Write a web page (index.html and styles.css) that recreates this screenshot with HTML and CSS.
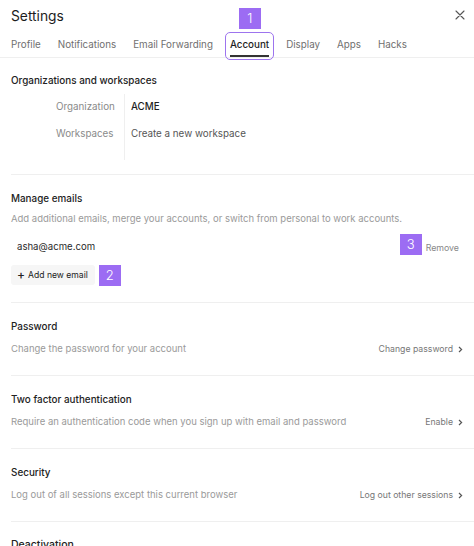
FILE: index.html
```html
<!DOCTYPE html>
<html>
<head>
<meta charset="utf-8">
<link rel="stylesheet" href="styles.css">
</head>
<body>
<div class="page">
  <header class="header">
    <h1 class="title">Settings</h1>
    <button class="close" aria-label="Close">
      <svg width="10" height="10" viewBox="0 0 10 10"><path d="M1 1L9 9M9 1L1 9" stroke="#555" stroke-width="1.1" fill="none" stroke-linecap="round"/></svg>
    </button>
  </header>
  <nav class="tabs">
    <span class="tab">Profile</span>
    <span class="tab">Notifications</span>
    <span class="tab">Email Forwarding</span>
    <span class="tab active">Account<span class="hl"></span><span class="badge badge-1">1</span></span>
    <span class="tab">Display</span>
    <span class="tab">Apps</span>
    <span class="tab">Hacks</span>
  </nav>

  <section class="section org">
    <h2 class="sec-title">Organizations and workspaces</h2>
    <div class="org-grid">
      <div class="org-label">Organization</div>
      <div class="org-value strong">ACME</div>
      <div class="org-label last">Workspaces</div>
      <div class="org-value last">Create a new workspace</div>
    </div>
  </section>

  <section class="section emails">
    <h2 class="sec-title">Manage emails</h2>
    <p class="desc">Add additional emails, merge your accounts, or switch from personal to work accounts.</p>
    <div class="email-row">
      <span class="email">asha@acme.com</span>
      <span class="remove">Remove<span class="badge badge-3">3</span></span>
    </div>
    <div class="add-row">
      <button class="add-btn"><span class="plus">+</span> Add new email<span class="badge badge-2">2</span></button>
    </div>
  </section>

  <section class="section plain">
    <h2 class="sec-title">Password</h2>
    <div class="row">
      <p class="desc">Change the password for your account</p>
      <span class="action">Change password <svg class="chev" width="5" height="7" viewBox="0 0 5 7"><path d="M1 1L3.6 3.5L1 6" stroke="#555" stroke-width="1.2" fill="none"/></svg></span>
    </div>
  </section>

  <section class="section plain">
    <h2 class="sec-title">Two factor authentication</h2>
    <div class="row">
      <p class="desc">Require an authentication code when you sign up with email and password</p>
      <span class="action">Enable <svg class="chev" width="5" height="7" viewBox="0 0 5 7"><path d="M1 1L3.6 3.5L1 6" stroke="#555" stroke-width="1.2" fill="none"/></svg></span>
    </div>
  </section>

  <section class="section plain">
    <h2 class="sec-title">Security</h2>
    <div class="row">
      <p class="desc">Log out of all sessions except this current browser</p>
      <span class="action">Log out other sessions <svg class="chev" width="5" height="7" viewBox="0 0 5 7"><path d="M1 1L3.6 3.5L1 6" stroke="#555" stroke-width="1.2" fill="none"/></svg></span>
    </div>
  </section>

  <section class="section plain">
    <h2 class="sec-title deact">Deactivation</h2>
  </section>
</div>
</body>
</html>
```

FILE: styles.css
```css
* { box-sizing: border-box; }
html, body { margin: 0; padding: 0; background: #fff; }
body {
  font-family: Inter, "Noto Sans", "Liberation Sans", sans-serif;
  color: #222;
  overflow: hidden;
  height: 546px;
}
.page { width: 474px; }
.header {
  height: 32px;
  padding: 7px 11px 0 11px;
  display: flex;
  justify-content: space-between;
  align-items: flex-start;
}
.title {
  margin: 0;
  font-size: 13.8px;
  line-height: 18px;
  font-weight: 400;
  color: #1c1c1c;
}
.close {
  border: 0; background: none; padding: 0;
  width: 10px; height: 10px;
  margin-top: 3px;
  margin-right: -2px;
  display: flex;
}
.tabs {
  display: flex;
  gap: 17px;
  padding: 0 11px;
  border-bottom: 1px solid #efefef;
}
.tab {
  position: relative;
  font-size: 9.8px;
  line-height: 13px;
  padding: 6px 0 4px;
  color: #6f6f6f;
  border-bottom: 2px solid transparent;
  white-space: nowrap;
}
.tab.active {
  color: #1e1e1e;
  font-weight: 500;
  border-bottom-color: #333;
}
.hl {
  position: absolute;
  left: -5px; right: -5px; top: 0; bottom: -5px;
  border: 1.5px solid #9d74ee;
  border-radius: 5px;
}
.badge {
  position: absolute;
  width: 22px;
  height: 21px;
  background: #9c6cf3;
  color: #fff;
  font-size: 13px;
  line-height: 21px;
  text-align: center;
  font-weight: 300;
}
.badge-1 { left: 9px; top: -24px; }
.section {
  margin-left: 11px;
  border-top: 1px solid #efefef;
  padding: 16px 11px 17px 0;
}
.section.org { border-top: 0; margin-left: 0; padding: 15px 11px 14px 11px; }
.section.plain { padding-bottom: 19px; }
.sec-title {
  margin: 0;
  font-size: 9.9px;
  line-height: 14px;
  font-weight: 500;
  color: #222;
}
.org-grid {
  margin: 7px 0 0 45px;
  display: grid;
  grid-template-columns: 68px 1fr;
}
.org-label, .org-value {
  font-size: 9.8px;
  line-height: 14px;
  padding: 6px 0 7px;
}
.org-label { color: #8a8a8a; }
.org-value { border-left: 1px solid #efefef; padding-left: 6px; color: #555; }
.org-value.strong { color: #1e1e1e; font-weight: 500; }
.org-label.last, .org-value.last { padding-bottom: 19px; }
.desc {
  margin: 0;
  font-size: 9.5px;
  line-height: 14px;
  color: #9a9a9a;
}
.emails .desc { margin-top: 7px; }
.email-row {
  margin-top: 10px;
  height: 21px;
  display: flex;
  justify-content: space-between;
  align-items: center;
  padding-left: 6px;
}
.email { font-size: 9.6px; color: #2a2a2a; }
.remove {
  position: relative;
  font-size: 8.8px;
  color: #888;
  margin-right: 4px;
  margin-top: 2px;
}
.badge-3 { left: -26px; top: -8px; }
.add-row { margin-top: 8px; display: flex; }
.add-btn {
  position: relative;
  border: 0;
  background: #f6f6f6;
  height: 20px;
  padding: 0 7px 0 6px;
  border-radius: 3px;
  font-family: inherit;
  font-size: 8.6px;
  color: #222;
  display: flex;
  align-items: center;
  gap: 3px;
}
.plus { font-size: 12px; line-height: 1; font-weight: 500; margin-top: -1px; }
.badge-2 { left: calc(100% + 4px); top: 0; }
.row {
  margin-top: 9px;
  display: flex;
  justify-content: space-between;
  align-items: center;
}
.action {
  font-size: 8.7px;
  color: #777;
  display: flex;
  align-items: center;
  gap: 5px;
}
.chev { display: block; }
.deact { font-size: 10.5px; }
```
